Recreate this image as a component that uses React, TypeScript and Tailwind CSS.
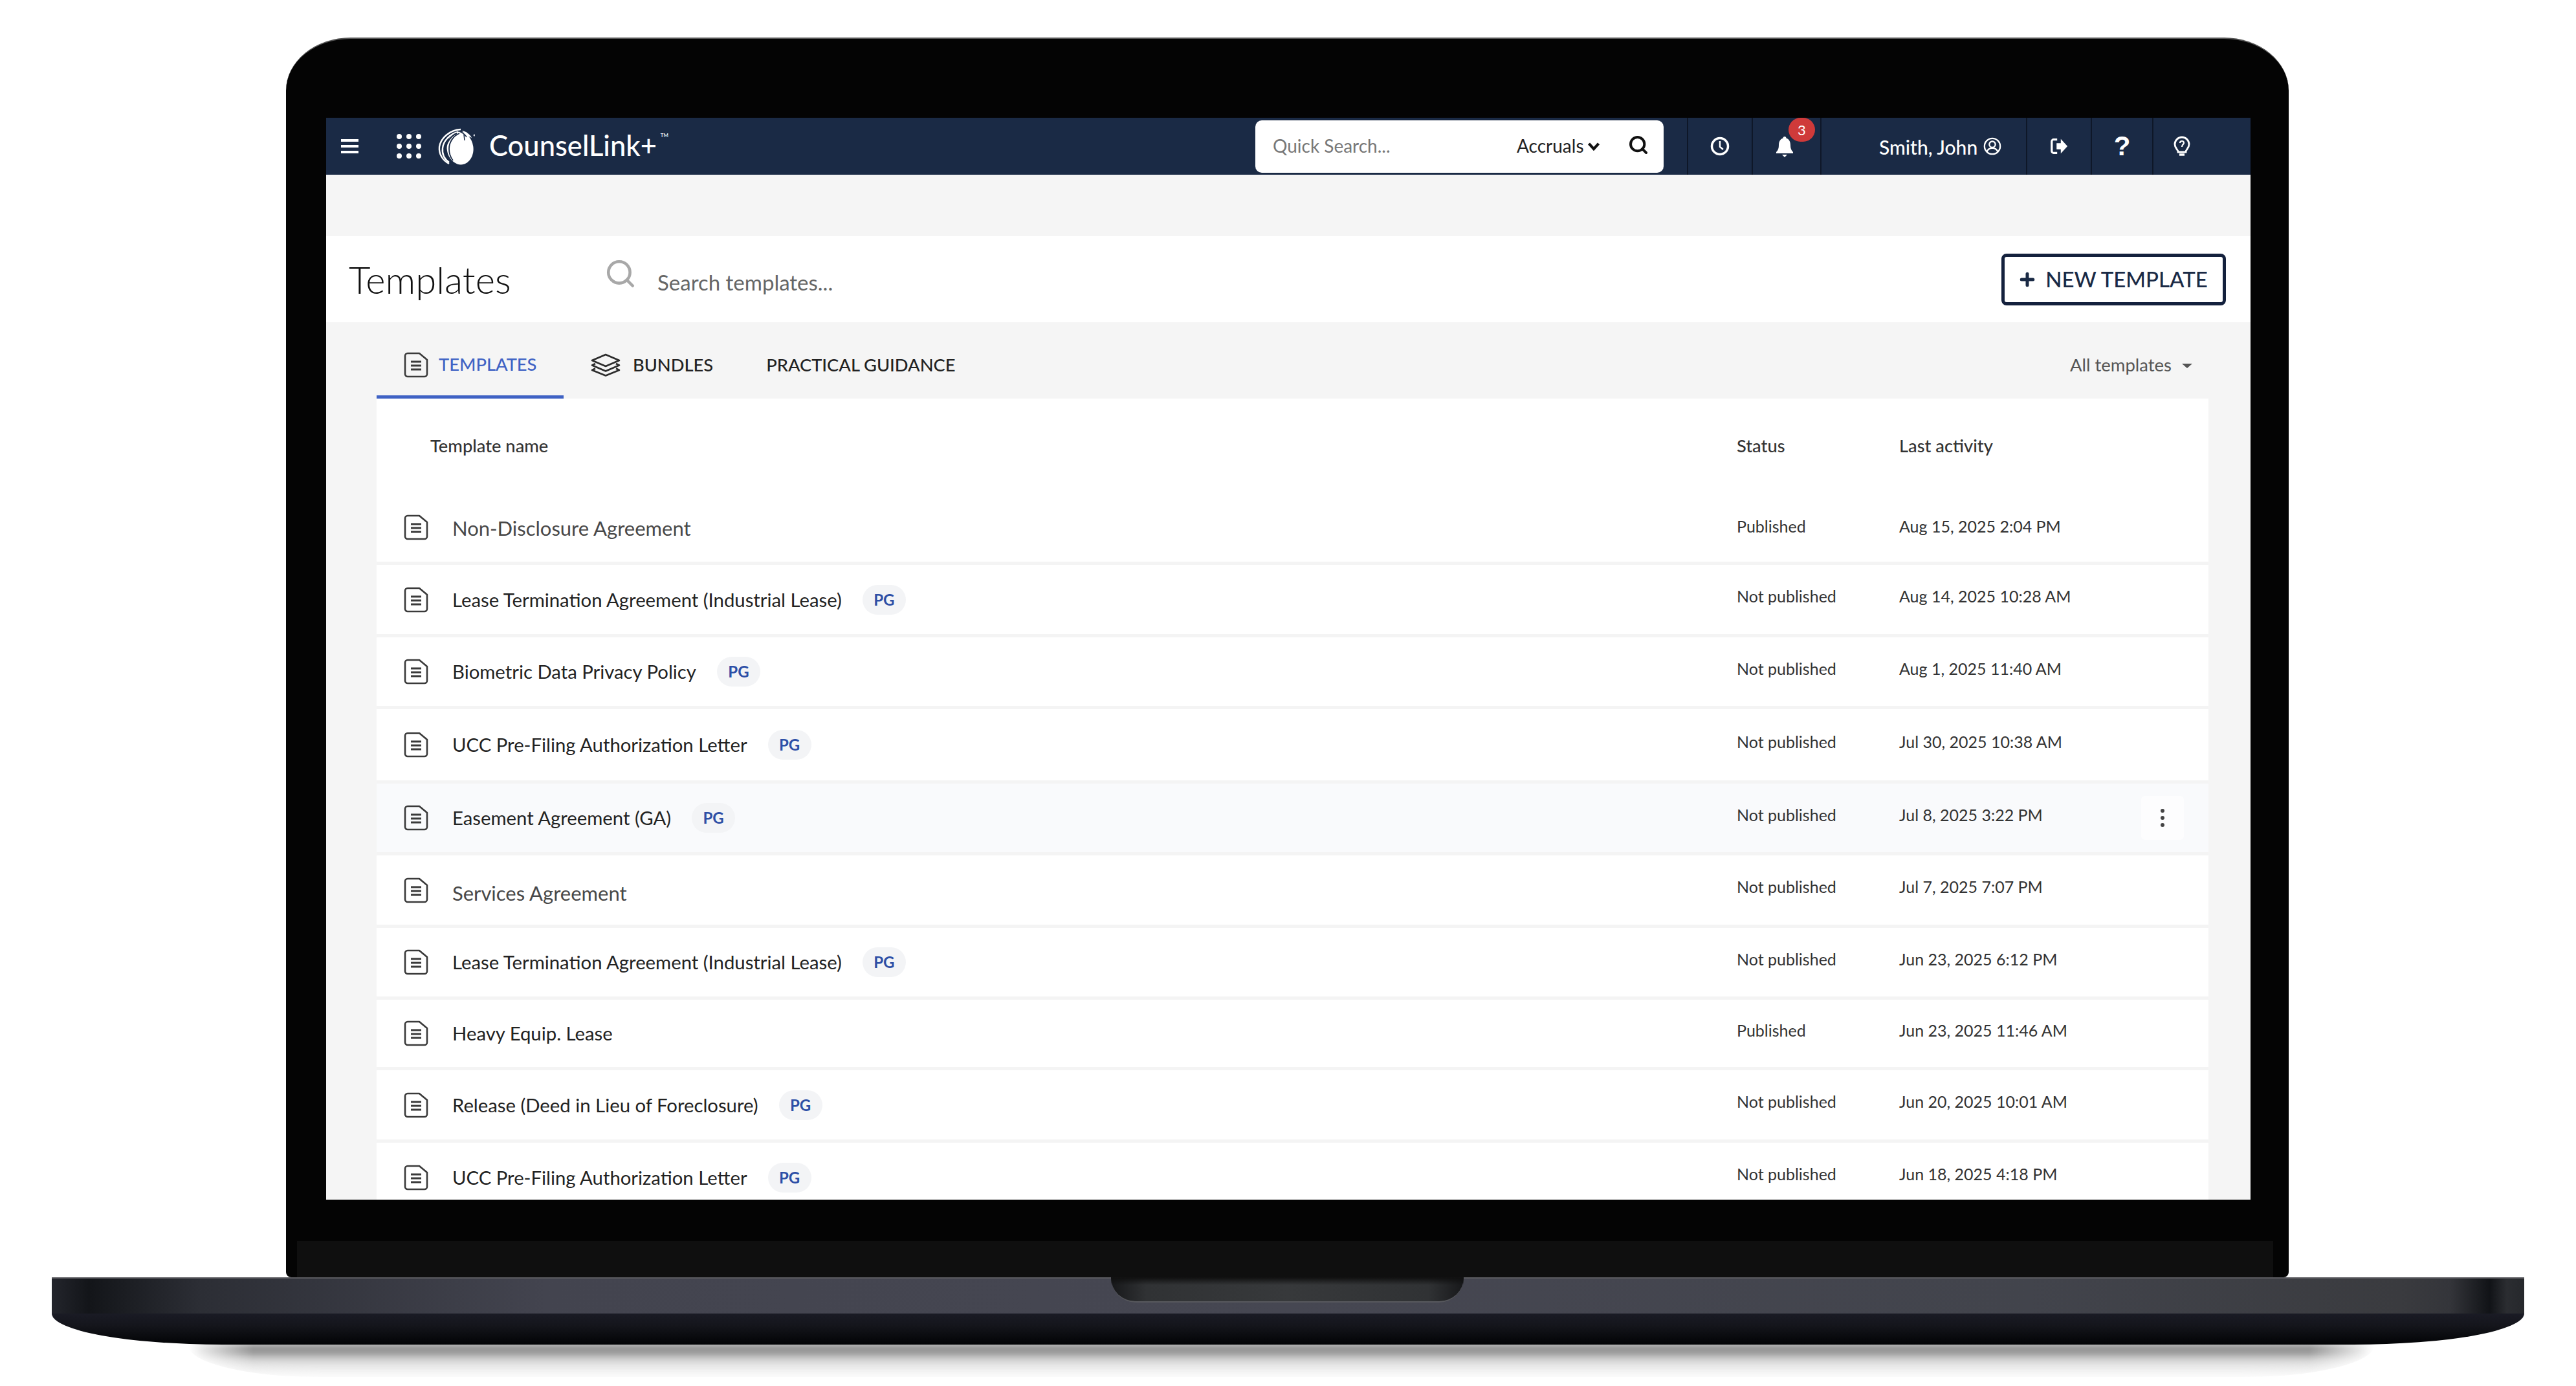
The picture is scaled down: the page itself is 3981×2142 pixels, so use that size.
import { Plus, Search } from "lucide-react";

type TemplateRow = {
  name: string;
  status: string;
  date: string;
  height: string;
  pg?: boolean;
  muted?: boolean;
  hover?: boolean;
  nameClass?: string;
  dataClass?: string;
};

const rows: TemplateRow[] = [
  { name: "Non-Disclosure Agreement", status: "Published", date: "Aug 15, 2025 2:04 PM", height: "h-[112px]", muted: true, nameClass: "pt-[4px]", dataClass: "pb-[2px]" },
  { name: "Lease Termination Agreement (Industrial Lease)", status: "Not published", date: "Aug 14, 2025 10:28 AM", height: "h-[112px]", pg: true },
  { name: "Biometric Data Privacy Policy", status: "Not published", date: "Aug 1, 2025 11:40 AM", height: "h-[111px]", pg: true },
  { name: "UCC Pre-Filing Authorization Letter", status: "Not published", date: "Jul 30, 2025 10:38 AM", height: "h-[115px]", pg: true },
  { name: "Easement Agreement (GA)", status: "Not published", date: "Jul 8, 2025 3:22 PM", height: "h-[111px]", pg: true, hover: true },
  { name: "Services Agreement", status: "Not published", date: "Jul 7, 2025 7:07 PM", height: "h-[112px]", muted: true, nameClass: "pt-[10px]" },
  { name: "Lease Termination Agreement (Industrial Lease)", status: "Not published", date: "Jun 23, 2025 6:12 PM", height: "h-[111px]", pg: true },
  { name: "Heavy Equip. Lease", status: "Published", date: "Jun 23, 2025 11:46 AM", height: "h-[109px]" },
  { name: "Release (Deed in Lieu of Foreclosure)", status: "Not published", date: "Jun 20, 2025 10:01 AM", height: "h-[112px]", pg: true },
  { name: "UCC Pre-Filing Authorization Letter", status: "Not published", date: "Jun 18, 2025 4:18 PM", height: "h-[112px]", pg: true },
];

function DocIcon() {
  return (
    <svg viewBox="0 0 38 40" className="h-[40px] w-[38px] shrink-0" fill="none" stroke="#3a3a3a" strokeWidth="2.6">
      <path d="M6 2h18l12 10v22a4 4 0 0 1-4 4H6a4 4 0 0 1-4-4V6a4 4 0 0 1 4-4z" strokeLinejoin="round" />
      <path d="M11 15h16M11 21h16M11 27h16" strokeWidth="3" />
    </svg>
  );
}

function BundlesIcon() {
  return (
    <svg viewBox="0 0 46 36" className="h-[36px] w-[46px]" fill="none" stroke="#2c2c2c" strokeWidth="2.6" strokeLinejoin="round">
      <path d="M23 2 44 11 23 20 2 11z" />
      <path d="M7 16 2 18.500 23 27.500 44 18.500 39 16" />
      <path d="M7 23.500 2 26 23 34.500 44 26 39 23.500" />
    </svg>
  );
}

function Logo() {
  return (
    <svg viewBox="0 0 58 58" className="h-[58px] w-[58px]" fill="none">
      <ellipse cx="35" cy="32" rx="20.500" ry="25.500" transform="rotate(-8 35 32)" fill="white" />
      <path d="M36 3C18 4 5 17 3 30c-1 11 5 21 15 26" stroke="white" strokeWidth="2.400" />
      <path d="M32 7C19 10 9 21 8 32c-1 9 3 17 10 22" stroke="white" strokeWidth="2.400" />
      <path d="M30 9C21 13 13 23 13 33c0 8 3 14 8 19" stroke="#1a2a45" strokeWidth="2.400" />
      <path d="M34 9c-9 4-16 13-16 24 0 7 2 13 6 18" stroke="#1a2a45" strokeWidth="1.800" />
      <path d="M38 5c6 1 12 5 15 11l-9-4z" fill="white" />
      <path d="M34 6c5 2 9 5 11 9M41 11l1 9" stroke="#1a2a45" strokeWidth="1.500" />
      <circle cx="57" cy="12" r="1.500" fill="#c8cdd6" />
    </svg>
  );
}

function DotGrid() {
  return (
    <div className="grid h-[38px] w-[38px] grid-cols-3 gap-x-[7px] gap-y-[7px]">
      {Array.from({ length: 9 }).map((_, i) => (
        <span key={i} className="h-[8px] w-[8px] rounded-full bg-white" />
      ))}
    </div>
  );
}

function NavBar() {
  return (
    <div className="flex h-[88px] shrink-0 items-center bg-[#1a2a45] pl-[23px] text-white">
      <div className="flex w-[27px] flex-col gap-[5px]">
        <span className="h-[4px] bg-white" />
        <span className="h-[4px] bg-white" />
        <span className="h-[4px] bg-white" />
      </div>
      <div className="ml-[59px]">
        <DotGrid />
      </div>
      <div className="ml-[25px]">
        <Logo />
      </div>
      <div className="relative ml-[22px] w-[261px] pb-[3px] text-[43.5px] leading-none font-medium">
        CounselLink+
        <span className="absolute top-[2px] -right-[16px] text-[8px] leading-none">TM</span>
      </div>

      <div className="mt-[1px] ml-[923px] flex h-[81px] w-[631px] items-center rounded-[10px] bg-white pl-[27px] text-[28px]">
        <span className="w-[377px] pb-[4px] text-[#777]">Quick Search...</span>
        <span className="pb-[4px] text-[#222]">Accruals</span>
        <svg viewBox="0 0 24 16" className="mb-[2px] ml-[5px] h-[14px] w-[20px]" fill="none" stroke="#111" strokeWidth="5">
          <path d="M3 3l9 10 9-10" />
        </svg>
        <Search className="mb-[6px] ml-[43px] h-[32px] w-[32px] text-[#111]" strokeWidth={3} />
      </div>

      <div className="ml-[36px] flex h-full">
        <div className="flex w-[100px] items-center justify-center border-l-2 border-[#0e1728]">
          <svg viewBox="0 0 30 30" className="h-[30px] w-[30px]" fill="none" stroke="white">
            <circle cx="15" cy="15" r="12.500" strokeWidth="3.500" />
            <path d="M15 7v9l5 4" strokeWidth="2.500" />
          </svg>
        </div>
        <div className="relative flex w-[106px] items-center justify-center border-l-2 border-[#0e1728] pr-[6px]">
          <svg viewBox="0 0 28 32" className="mt-[2px] h-[32px] w-[28px]" fill="white">
            <path d="M14 0c1.500 0 2.500 1 2.500 2.500C21 4 23 8 23 13c0 5 1 8 4 11v2H1v-2c3-3 4-6 4-11 0-5 2-9 6.500-10.500C11.500 1 12.500 0 14 0z" />
            <path d="M10 28h8l-4 4z" />
          </svg>
          <span className="absolute top-0 left-[55px] flex h-[37px] w-[41px] items-center justify-center rounded-full bg-[#cf3a3a] text-[22px] leading-none text-white">
            3
          </span>
        </div>
        <div className="flex w-[318px] items-center border-l-2 border-[#0e1728] pl-[89px] text-[30px] font-medium">
          <span className="mt-[3px]">Smith, John</span>
          <svg viewBox="0 0 30 30" className="ml-[9px] h-[30px] w-[28px]" fill="none" stroke="white" strokeWidth="2.500">
            <circle cx="15" cy="15" r="13" />
            <circle cx="15" cy="12" r="5" />
            <path d="M6 24c2-5 5-6 9-6s7 1 9 6" />
          </svg>
        </div>
        <div className="flex w-[100px] items-center justify-center border-l-2 border-[#0e1728]">
          <svg viewBox="0 0 30 30" className="h-[28px] w-[30px]" fill="none">
            <path d="M12 4H6a3 3 0 0 0-3 3v16a3 3 0 0 0 3 3h6" stroke="white" strokeWidth="3.500" />
            <path d="M11 10h7V3l11 12-11 12v-7h-7z" fill="white" />
          </svg>
        </div>
        <div className="flex w-[95px] items-center justify-center border-l-2 border-[#0e1728] font-['Liberation_Sans',sans-serif] text-[42px] leading-none font-bold">
          ?
        </div>
        <div className="flex w-[151px] items-center border-l-2 border-[#0e1728] pl-[31px]">
          <svg viewBox="0 0 26 32" className="h-[32px] w-[26px]" fill="none" stroke="white" strokeWidth="2.800">
            <path d="M13 2a11 11 0 0 1 11 11c0 4-2 6-4 9-1 1-1 2-1 3H7c0-1 0-2-1-3-2-3-4-5-4-9A11 11 0 0 1 13 2z" />
            <path d="M9 29h8" strokeWidth="3.500" />
            <path d="M10 11c0-4 6-4 6 0 0 2-3 2-3 6" strokeWidth="2.200" />
          </svg>
        </div>
      </div>
    </div>
  );
}

function PageHeader() {
  return (
    <div className="flex h-[133px] shrink-0 items-center bg-white pr-[38px] pl-[35px]">
      <h1 className="w-[395px] pt-[1px] text-[58px] leading-none font-light text-[#111]">Templates</h1>
      <Search className="mb-[18px] h-[50px] w-[50px] text-[#a8a8a8]" strokeWidth={2.2} />
      <span className="ml-[32px] pt-[10px] text-[33px] text-[#666]">Search templates...</span>
      <button
        type="button"
        className="ml-auto flex h-[80px] w-[347px] items-center justify-center gap-[13px] rounded-[8px] border-[5px] border-[#14213d] bg-white pr-[3px] text-[33px] font-medium text-[#1a2a45]"
      >
        <Plus className="h-[30px] w-[30px]" strokeWidth={4} />
        NEW TEMPLATE
      </button>
    </div>
  );
}

function Tabs() {
  return (
    <div className="mr-[65px] ml-[78px] flex h-[118px] shrink-0 items-start">
      <div className="flex h-[118px] w-[289px] items-center gap-[16px] border-b-[5px] border-[#3f62c4] pt-[18px] pl-[42px] text-[27.3px] font-medium text-[#3f62c4]">
        <DocIcon />
        TEMPLATES
      </div>
      <div className="ml-[42px] flex h-[114px] items-center gap-[19px] pt-[18px] text-[27.3px] font-medium text-[#222]">
        <BundlesIcon />
        BUNDLES
      </div>
      <div className="ml-[82px] flex h-[114px] items-center pt-[18px] text-[27.3px] font-medium text-[#222]">PRACTICAL GUIDANCE</div>
      <div className="ml-auto flex h-[114px] items-center pt-[18px] pr-[25px] text-[27.5px] text-[#555]">
        All templates
        <span className="mt-[3px] ml-[16px] h-0 w-0 border-x-[8px] border-t-[7px] border-x-transparent border-t-[#555]" />
      </div>
    </div>
  );
}

function Row({ row }: { row: TemplateRow }) {
  const dataClass = row.dataClass ?? "pb-[9px]";
  return (
    <div
      className={
        row.height +
        (row.hover ? " bg-[#f9fafc]" : "") +
        " flex items-center border-b-[5px] border-[#f4f4f4] pl-[42px] text-[25px] text-[#333]"
      }
    >
      <div className="flex w-[2060px] items-center">
        <DocIcon />
        <span
          className={
            (row.muted ? "ml-[37px] text-[31px] text-[#484848] " : "ml-[37px] text-[29.3px] text-[#222] ") + (row.nameClass ?? "")
          }
        >
          {row.name}
        </span>
        {row.pg && (
          <span className="ml-[32px] flex h-[46px] w-[67px] items-center justify-center rounded-full bg-[#f3f4f6] text-[24px] font-bold text-[#2d4fa6]">
            PG
          </span>
        )}
      </div>
      <div className={"w-[251px] " + dataClass}>{row.status}</div>
      <div className={"flex-1 " + dataClass}>{row.date}</div>
      {row.hover && (
        <div className="mr-[38px] flex h-[68px] w-[66px] flex-col items-center justify-center gap-[5px] rounded-[6px] bg-[#fdfdfe]">
          <span className="h-[6px] w-[6px] rounded-full bg-[#444]" />
          <span className="h-[6px] w-[6px] rounded-full bg-[#444]" />
          <span className="h-[6px] w-[6px] rounded-full bg-[#444]" />
        </div>
      )}
    </div>
  );
}

function TemplatesTable() {
  return (
    <div className="mr-[65px] ml-[78px] flex-1 overflow-hidden bg-white">
      <div className="flex h-[145px] pt-[57px] text-[27.3px] leading-[32px] font-medium text-[#333]">
        <div className="w-[2102px] pl-[83px]">Template name</div>
        <div className="w-[251px]">Status</div>
        <div>Last activity</div>
      </div>
      {rows.map((row, i) => (
        <Row key={i} row={row} />
      ))}
    </div>
  );
}

export default function App() {
  return (
    <div className="h-[2142px] w-[3981px] overflow-hidden bg-white pt-[58px] font-['Lato',sans-serif]">
      {/* lid */}
      <div className="ml-[442px] flex h-[1916px] w-[3095px] flex-col rounded-t-[100px_82px] rounded-b-[8px] border-t-[2px] border-[#555] bg-[#040404] pt-[122px] pr-[59px] pl-[62px]">
        <div className="flex h-[1672px] shrink-0 flex-col overflow-hidden bg-[#f5f5f5]">
          <NavBar />
          <div className="h-[95px] shrink-0" />
          <PageHeader />
          <Tabs />
          <TemplatesTable />
        </div>
        <div className="mt-[64px] -mr-[35px] -ml-[45px] h-[56px] bg-[#0f0f0f]" />
      </div>

      {/* base */}
      <div className="relative z-10 ml-[80px] w-[3821px]">
        <div className="h-[56px] border-t-[2px] border-[#5b5b60] bg-[linear-gradient(90deg,#23252c_0%,#131519_1.5%,#2c2e35_6%,#43444f_20%,#464752_50%,#42444c_80%,#3a3b3f_95%,#34353a_97%,#111317_98.600%,#2b2d31_99.300%,#26282c_100%)]" />
        <div className="h-[48px] rounded-b-[264px_48px] bg-[linear-gradient(180deg,#1a1b25_0%,#14151b_40%,#020305_100%)]" />
        <div className="absolute top-[1px] left-[1637px] h-[38px] w-[545px] rounded-b-[42px] border-b-[2px] border-[#57585d] bg-[linear-gradient(90deg,#17181a_0%,#303234_10%,#37393b_50%,#303234_90%,#17181a_100%)]" />
        <div className="absolute top-0 left-[1637px] h-[12px] w-[545px] bg-gradient-to-b from-[#0f0f0f] to-transparent" />
      </div>
      {/* shadow under the base */}
      <div className="ml-[290px] h-[50px] w-[3380px] rounded-b-[200px_50px] bg-gradient-to-b from-[#3c3c3c] via-[#d6d6d6] via-40% to-white blur-[8px] [mask-image:linear-gradient(90deg,transparent,black_3%,black_97%,transparent)]" />
    </div>
  );
}
